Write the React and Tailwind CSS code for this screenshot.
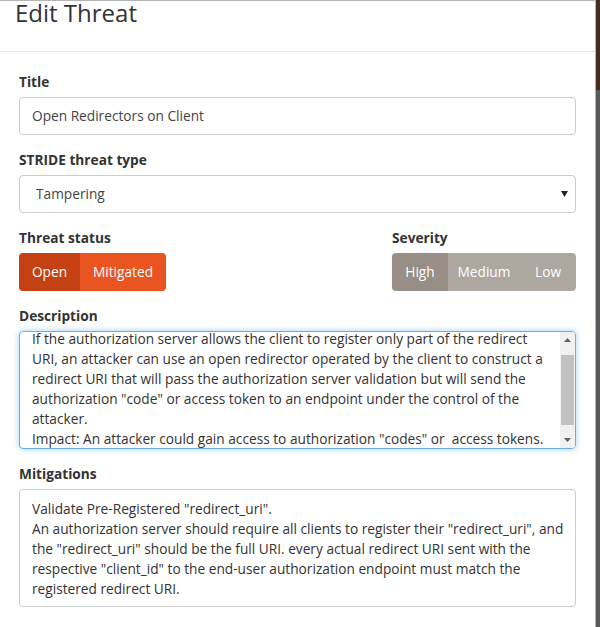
import React from 'react';

const description = [
  'If the authorization server allows the client to register only part of the redirect',
  'URI, an attacker can use an open redirector operated by the client to construct a',
  'redirect URI that will pass the authorization server validation but will send the',
  'authorization "code" or access token to an endpoint under the control of the',
  'attacker.',
  'Impact: An attacker could gain access to authorization "codes" or\u00a0 access tokens.',
];

const mitigations = [
  'Validate Pre-Registered "redirect_uri".',
  'An authorization server should require all clients to register their "redirect_uri", and',
  'the "redirect_uri" should be the full URI. every actual redirect URI sent with the',
  'respective "client_id" to the end-user authorization endpoint must match the',
  'registered redirect URI.',
];

const Label = ({ children }) => (
  <div className="text-[13.7px] font-bold leading-[20px] text-[#333] mb-[5px]">{children}</div>
);

const ScrollArrow = ({ up }) => (
  <div className="h-[16px] flex items-center justify-center">
    <svg width="7" height="4" viewBox="0 0 7 4">
      <polygon points={up ? '0,4 3.5,0 7,4' : '0,0 3.5,4 7,0'} fill="#606060" />
    </svg>
  </div>
);

export default function App() {
  return (
    <div className="w-[600px] h-[627px] overflow-hidden flex bg-[#5a5a5a] font-['Open_Sans',sans-serif]">
      <div className="w-[596px] h-full bg-white border-t border-r border-[#b5b5b5] flex flex-col">
        {/* Header */}
        <div className="h-[51px] border-b border-[#e5e5e5] px-[15px] shrink-0">
          <h4 className="text-[24px] leading-[26px] text-[#333] -mt-[1px]">Edit Threat</h4>
        </div>

        {/* Body */}
        <div className="px-[19px] pt-[20px] flex flex-col">
          <div className="mb-[15px]">
            <Label>Title</Label>
            <div className="h-[38px] border border-[#ccc] rounded-[4px] px-[12px] flex items-center text-[13.7px] text-[#444]">
              Open Redirectors on Client
            </div>
          </div>

          <div className="mb-[15px]">
            <Label>STRIDE threat type</Label>
            <div className="h-[38px] border border-[#ccc] rounded-[4px] pl-[16px] pr-[7px] flex items-center justify-between text-[13.7px] text-[#444]">
              <span>Tampering</span>
              <svg width="7" height="6" viewBox="0 0 7 6">
                <polygon points="0,0 7,0 3.5,6" fill="#222" />
              </svg>
            </div>
          </div>

          <div className="mb-[15px] flex justify-between">
            <div>
              <Label>Threat status</Label>
              <div className="flex h-[38px] text-[13.7px] text-white">
                <div className="w-[61px] bg-[#c34113] rounded-l-[4px] flex items-center justify-center">Open</div>
                <div className="w-[86px] bg-[#e95420] rounded-r-[4px] flex items-center justify-center">Mitigated</div>
              </div>
            </div>
            <div>
              <Label>Severity</Label>
              <div className="flex h-[38px] text-[13.7px] text-white">
                <div className="w-[56px] bg-[#978e85] rounded-l-[4px] flex items-center justify-center">High</div>
                <div className="w-[72px] bg-[#aea79f] flex items-center justify-center">Medium</div>
                <div className="w-[56px] bg-[#aea79f] rounded-r-[4px] flex items-center justify-center">Low</div>
              </div>
            </div>
          </div>

          <div className="mb-[15px]">
            <Label>Description</Label>
            <div className="h-[118px] border border-[#66afe9] rounded-[4px] shadow-[0_0_6px_rgba(102,175,233,0.6)] flex overflow-hidden">
              <div className="flex-1 pl-[12px] overflow-hidden">
                <div className="-mt-[3px] text-[13.7px] leading-[20px] text-[#333] whitespace-nowrap">
                  {description.map((line) => (
                    <div key={line}>{line}</div>
                  ))}
                </div>
              </div>
              <div className="w-[15px] bg-[#f1f1f1] flex flex-col">
                <ScrollArrow up />
                <div className="flex-1 py-[7px] px-[1px]">
                  <div className="h-full bg-[#c1c1c1]" />
                </div>
                <ScrollArrow />
              </div>
            </div>
          </div>

          <div>
            <Label>Mitigations</Label>
            <div className="h-[118px] border border-[#ccc] rounded-[4px] px-[12px] pt-[9px] text-[13.7px] leading-[20px] text-[#333] whitespace-nowrap">
              {mitigations.map((line) => (
                <div key={line}>{line}</div>
              ))}
            </div>
          </div>
        </div>
      </div>
      <div className="flex-1 flex flex-col">
        <div className="h-[90px] bg-[#4a2a1d]" />
        <div className="flex-1 bg-[#5a5a5a]" />
      </div>
    </div>
  );
}
